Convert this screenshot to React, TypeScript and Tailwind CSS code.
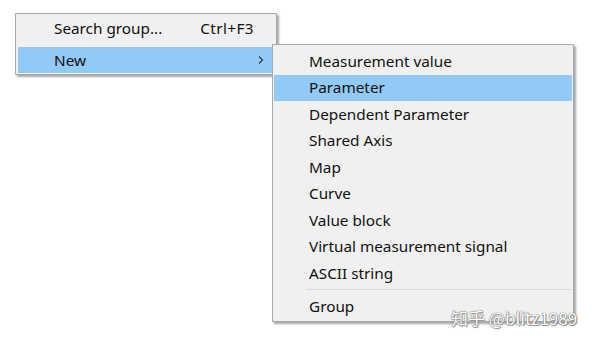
import React from "react";

const font = { fontFamily: '"Noto Sans", "Open Sans", "Noto Sans CJK SC", sans-serif' };

export default function App() {
  const items = [
    "Measurement value",
    "Parameter",
    "Dependent Parameter",
    "Shared Axis",
    "Map",
    "Curve",
    "Value block",
    "Virtual measurement signal",
    "ASCII string",
  ];
  return (
    <div className="relative w-[600px] h-[341px] bg-white overflow-hidden text-[15.3px] text-[#111]" style={font}>
      {/* main menu */}
      <div className="absolute left-[15px] top-[13px] w-[262px] bg-[#f0f0f0] border border-[#a9a9a9] shadow-[2px_2px_2px_rgba(0,0,0,0.35)] py-[1px] px-[2px] flex flex-col gap-[6px]">
        <div className="h-[26px] flex items-center pl-[36px] pr-[20px]">
          <span className="flex-1">Search group...</span>
          <span className="tracking-[0.4px]">Ctrl+F3</span>
        </div>
        <div className="h-[26px] flex items-center pl-[36px] pr-[8px] bg-[#91c9f7]">
          <span className="flex-1">New</span>
          <svg width="8" height="10" viewBox="0 0 8 10" className="mr-[1px]">
            <path d="M2 1.5 L5.5 5 L2 8.5" fill="none" stroke="#333" strokeWidth="1.1" />
          </svg>
        </div>
      </div>

      {/* submenu */}
      <div className="absolute left-[272px] top-[44px] w-[302px] bg-[#f0f0f0] border border-[#a9a9a9] shadow-[2px_2px_2px_rgba(0,0,0,0.35)] pt-[3px] pb-[1px] px-[1px] flex flex-col">
        {items.map((t) => (
          <div
            key={t}
            className={`h-[26.5px] flex items-center pl-[35px] ${t === "Parameter" ? "bg-[#91c9f7]" : ""}`}
          >
            {t}
          </div>
        ))}
        <div className="h-[6px] flex items-center pl-[32px]">
          <div className="h-px w-full bg-[#d9d9d9]" />
        </div>
        <div className="h-[27px] flex items-center pl-[35px]">Group</div>
      </div>

      {/* watermark */}
      <div
        className="absolute left-[451px] top-[305px] text-[17px] text-white [text-shadow:0_0_1px_#666,0_0_1px_#666,1px_1px_1px_#999]"
        style={{ fontFamily: '"Noto Sans CJK SC", "Noto Sans", sans-serif' }}
      >
        知乎 @blitz1989
      </div>
    </div>
  );
}
